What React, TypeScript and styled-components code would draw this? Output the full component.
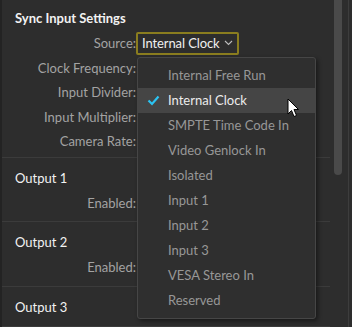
import { FC } from 'react';
import styled, { createGlobalStyle } from 'styled-components';

const GlobalStyle = createGlobalStyle`
  html, body {
    margin: 0;
    padding: 0;
    background: #2d2d2d;
  }
  body {
    font-family: Lato, 'Open Sans', sans-serif;
    font-size: 13px;
  }
`;

const Frame = styled.div`
  position: relative;
  width: 352px;
  height: 327px;
  overflow: hidden;
  display: flex;
  background: #2d2d2d;
`;

const LeftEdge = styled.div`
  width: 2px;
  background: #232323;
`;

const Content = styled.div`
  width: 328px;
  display: flex;
  flex-direction: column;
`;

const ScrollArea = styled.div`
  display: flex;
  margin-left: 4px;
  gap: 6px;
`;

const Thumb = styled.div`
  width: 8px;
  height: 175px;
  background: #4a4a4a;
  border-radius: 0 0 4px 4px;
`;

const TrackLine = styled.div`
  width: 1px;
  background: #3d3d3d;
`;

const Section = styled.section<{ $first?: boolean }>`
  padding: ${p => (p.$first ? '8px 0 3px' : '10px 0 6px')};
  border-bottom: 1px solid #3b3b3b;
  display: flex;
  flex-direction: column;
`;

const SectionTitle = styled.h3<{ $bold?: boolean }>`
  margin: 0 0 3px 13px;
  height: 20px;
  line-height: 20px;
  font-size: 13px;
  font-weight: ${p => (p.$bold ? 700 : 400)};
  color: #f2f2f2;
`;

const Row = styled.div`
  display: grid;
  grid-template-columns: 134px 1fr;
  height: 24.5px;
  align-items: center;
`;

const Label = styled.span`
  text-align: right;
  color: #a3a3a3;
`;

const Select = styled.div`
  box-sizing: border-box;
  width: 103px;
  height: 23px;
  border: 2px solid #8a7d1f;
  border-radius: 2px;
  display: flex;
  align-items: center;
  justify-content: space-between;
  padding: 0 4px 0 4px;
  color: #f0f0f0;
  letter-spacing: -0.1px;
`;

const Menu = styled.ul`
  position: absolute;
  left: 137px;
  top: 57px;
  width: 179px;
  box-sizing: border-box;
  margin: 0;
  padding: 5px 0;
  list-style: none;
  background: #2f2f2f;
  border: 1px solid #464646;
  border-radius: 3px;
  box-shadow: 2px 2px 4px rgba(0, 0, 0, 0.45);
`;

const MenuItem = styled.li<{ $active?: boolean }>`
  position: relative;
  height: 25px;
  line-height: 25px;
  padding-left: 30px;
  color: ${p => (p.$active ? '#ececec' : '#979797')};
  background: ${p => (p.$active ? '#454545' : 'transparent')};
`;

const Check = styled.svg`
  position: absolute;
  left: 9px;
  top: 7px;
`;

const Cursor = styled.svg`
  position: absolute;
  left: 287px;
  top: 98px;
`;

const syncRows = ['Clock Frequency:', 'Input Divider:', 'Input Multiplier:', 'Camera Rate:'];

const sources = [
  'Internal Free Run',
  'Internal Clock',
  'SMPTE Time Code In',
  'Video Genlock In',
  'Isolated',
  'Input 1',
  'Input 2',
  'Input 3',
  'VESA Stereo In',
  'Reserved',
];

const App: FC = () => {
  return (
    <Frame>
      <GlobalStyle />
      <LeftEdge />
      <Content>
        <Section $first>
          <SectionTitle $bold>Sync Input Settings</SectionTitle>
          <Row>
            <Label>Source:</Label>
            <Select>
              Internal Clock
              <svg width="9" height="6" viewBox="0 0 9 6">
                <path d="M1 1 L4.5 4.5 L8 1" fill="none" stroke="#bdbdbd" strokeWidth="1.1" />
              </svg>
            </Select>
          </Row>
          {syncRows.map(label => (
            <Row key={label}>
              <Label>{label}</Label>
            </Row>
          ))}
        </Section>
        {[1, 2].map(n => (
          <Section key={n}>
            <SectionTitle>Output {n}</SectionTitle>
            <Row>
              <Label>Enabled:</Label>
            </Row>
          </Section>
        ))}
        <Section>
          <SectionTitle>Output 3</SectionTitle>
        </Section>
      </Content>
      <ScrollArea>
        <Thumb />
        <TrackLine />
      </ScrollArea>
      <Menu>
        {sources.map(s => (
          <MenuItem key={s} $active={s === 'Internal Clock'}>
            {s === 'Internal Clock' && (
              <Check width="13" height="11" viewBox="0 0 13 11">
                <path d="M1.5 5.5 L5 9 L11.5 1.5" fill="none" stroke="#2bc3f2" strokeWidth="2.2" />
              </Check>
            )}
            {s}
          </MenuItem>
        ))}
      </Menu>
      <Cursor width="13" height="20" viewBox="0 0 13 20">
        <path d="M1 1 L1 16 L4.5 12.5 L7 18.5 L9.5 17.5 L7 11.5 L11.5 11.5 Z" fill="#fff" stroke="#000" strokeWidth="1" />
      </Cursor>
    </Frame>
  );
};

export default App;
